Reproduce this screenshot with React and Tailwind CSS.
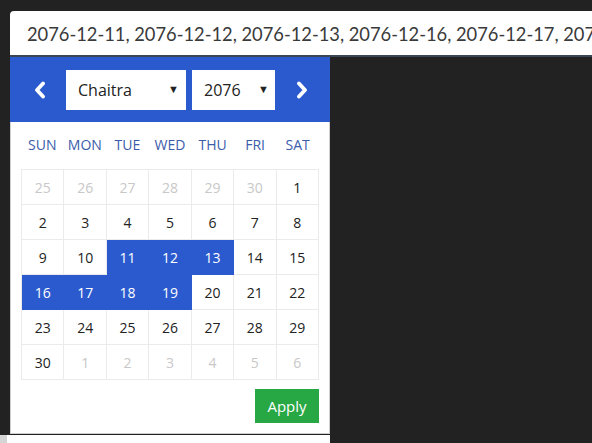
import React from "react";

const BLUE = "bg-[#2b5acf]";

const rows = [
  [["25", 0], ["26", 0], ["27", 0], ["28", 0], ["29", 0], ["30", 0], ["1", 1]],
  [["2", 1], ["3", 1], ["4", 1], ["5", 1], ["6", 1], ["7", 1], ["8", 1]],
  [["9", 1], ["10", 1], ["11", 2], ["12", 2], ["13", 2], ["14", 1], ["15", 1]],
  [["16", 2], ["17", 2], ["18", 2], ["19", 2], ["20", 1], ["21", 1], ["22", 1]],
  [["23", 1], ["24", 1], ["25", 1], ["26", 1], ["27", 1], ["28", 1], ["29", 1]],
  [["30", 1], ["1", 0], ["2", 0], ["3", 0], ["4", 0], ["5", 0], ["6", 0]],
];

const days = ["SUN", "MON", "TUE", "WED", "THU", "FRI", "SAT"];

function Chevron({ dir }) {
  return (
    <svg width="14" height="18" viewBox="0 0 14 18">
      {dir === "left" ? (
        <polyline points="10,2.5 4,9 10,15.5" fill="none" stroke="white" strokeWidth="3.8" strokeLinecap="round" strokeLinejoin="round" />
      ) : (
        <polyline points="4,2.5 10,9 4,15.5" fill="none" stroke="white" strokeWidth="3.8" strokeLinecap="round" strokeLinejoin="round" />
      )}
    </svg>
  );
}

export default function App() {
  return (
    <div className="w-[592px] h-[443px] bg-[#222222] overflow-hidden relative" style={{ fontFamily: '"Open Sans", "Noto Sans", sans-serif' }}>
      <div className="pt-[11px] pl-[10px]">
        <div className="h-[46px] bg-white rounded-tl-[4px] border-b-2 border-[#3a4654] flex items-center pl-[17px] pt-[3px] overflow-hidden whitespace-nowrap text-[18.3px] text-[#3a3a3a]" style={{ fontFamily: 'Lato, "Open Sans", sans-serif' }}>
          <span>2076-12-11, 207</span>
          <span className="inline-block w-px h-[22px] bg-[#222]"></span>
          <span>6-12-12, 2076-12-13, 2076-12-16, 2076-12-17, 2076-12-18</span>
        </div>
        <div className="w-[320px]">
          <div className={`h-[65px] ${BLUE} flex items-center`}>
            <div className="w-[56px] flex justify-center pl-[3px]">
              <Chevron dir="left" />
            </div>
            <div className="w-[120px] h-[40px] bg-white flex items-center justify-between pl-[12px] pr-[7px] text-[16px] text-[#222]">
              <span>Chaitra</span>
              <span className="text-[11px]">▼</span>
            </div>
            <div className="w-[83px] h-[40px] ml-[6px] bg-white flex items-center justify-between pl-[12px] pr-[6px] text-[16px] text-[#222]">
              <span>2076</span>
              <span className="text-[11px]">▼</span>
            </div>
            <div className="flex-1 flex justify-center pr-[2px]">
              <Chevron dir="right" />
            </div>
          </div>
          <div className="bg-white border-x border-b border-[#cfcfcf] px-[10px] pb-[10px]">
            <div className="grid grid-cols-7 h-[47px] items-center pb-[2px]">
              {days.map((d) => (
                <div key={d} className="text-center text-[14px] text-[#3b5cab]">{d}</div>
              ))}
            </div>
            <div className="border-t border-l border-[#ebebeb]">
              {rows.map((r, i) => (
                <div key={i} className="grid grid-cols-7">
                  {r.map(([n, t], j) => (
                    <div
                      key={j}
                      className={
                        "h-[35px] flex items-center justify-center text-[14px] border-r border-b " +
                        (t === 2
                          ? "bg-[#2b5acf] border-[#2b5acf] text-white"
                          : t === 1
                          ? "border-[#ebebeb] text-[#222]"
                          : "border-[#ebebeb] text-[#c8c8c8]")
                      }
                    >
                      {n}
                    </div>
                  ))}
                </div>
              ))}
            </div>
            <div className="flex justify-end mt-[9px]">
              <div className="w-[64px] h-[34px] bg-[#28a745] text-white text-[15px] flex items-center justify-center">Apply</div>
            </div>
          </div>
        </div>
      </div>
      <div className="absolute left-0 top-[435px] w-[330px] h-[8px] bg-white">
        <div className="w-[7px] h-full bg-[#d4d4d4]"></div>
      </div>
    </div>
  );
}
